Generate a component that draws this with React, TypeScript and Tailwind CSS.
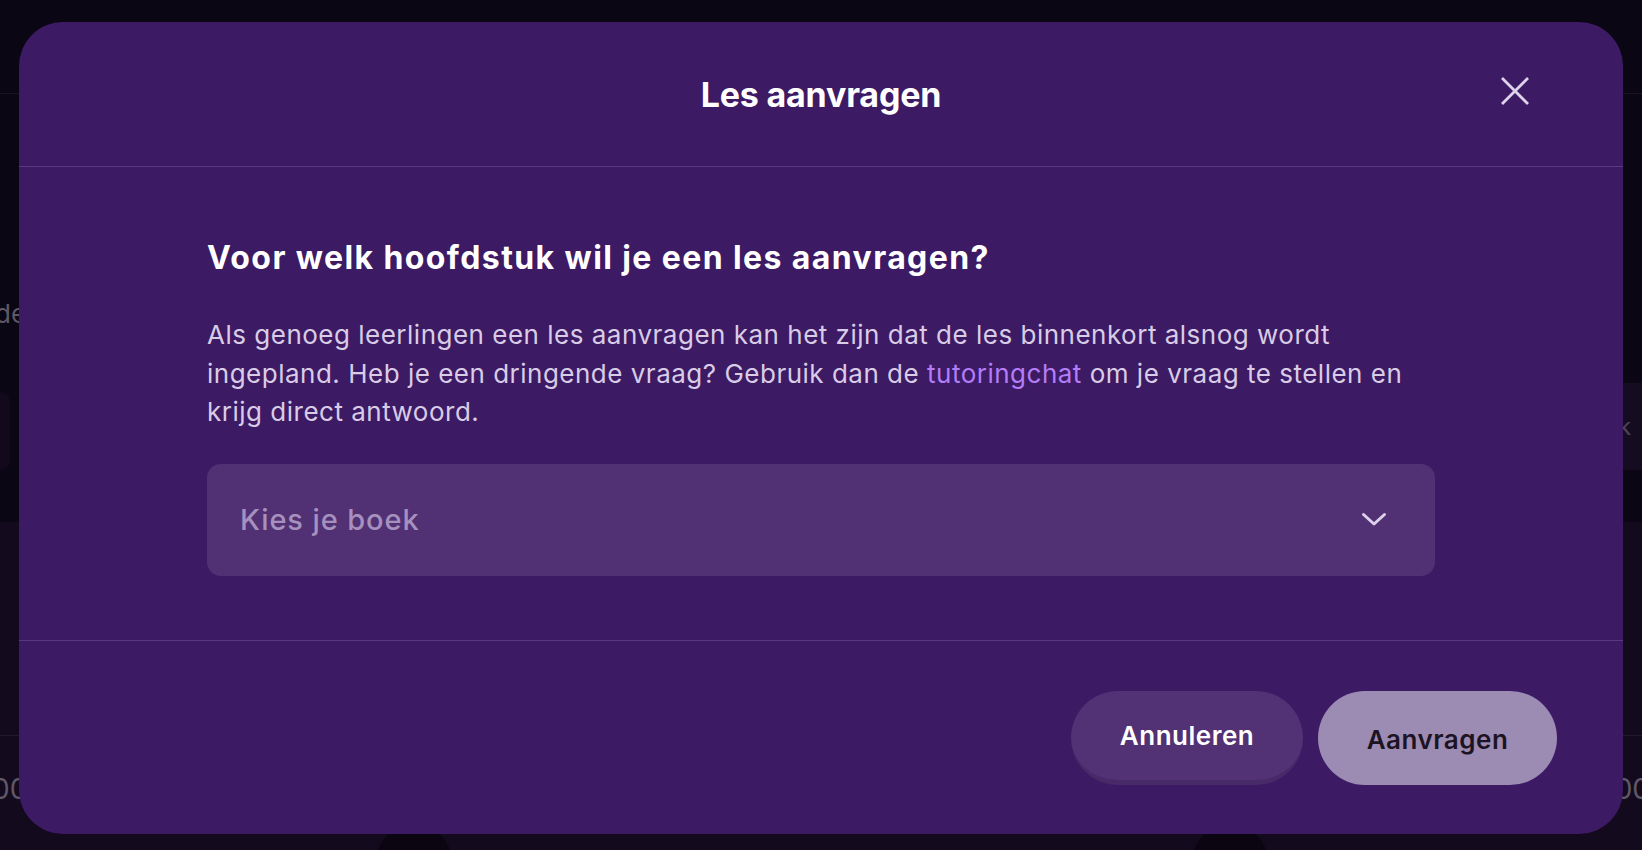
import React, { useState } from 'react';

// Dialog for requesting a lesson, shown over the dimmed course page.

const CloseIcon: React.FC = () => (
    <svg width="30" height="30" viewBox="0 0 30 30" fill="none" stroke="currentColor" strokeWidth="2.8" strokeLinecap="square">
        <path d="M3 3 L27 27 M27 3 L3 27" />
    </svg>
);

const Chevron: React.FC = () => (
    <svg width="26" height="15" viewBox="0 0 26 15" fill="none" stroke="currentColor" strokeWidth="3" strokeLinecap="round" strokeLinejoin="round">
        <path d="M2.5 2.5 L13 12 L23.5 2.5" />
    </svg>
);

const BackdropPage: React.FC = () => (
    <div className="flex h-full flex-col text-[#5f5868]">
        <div className="h-[94px] shrink-0 border-b border-[#1a1422] bg-[#0b0613]" />
        <div className="h-[189px] shrink-0 bg-[#0b0613]" />
        <div className="flex h-[60px] shrink-0 items-center bg-[#0b0613]">
            <span className="-ml-[5px] text-[26px]">de</span>
        </div>
        <div className="h-[40px] shrink-0 bg-[#0b0613]" />
        <div className="flex h-[87px] shrink-0 items-stretch justify-between bg-[#0b0613]">
            <div className="-ml-[10px] mt-[9px] w-[20px] rounded-[10px] bg-[#120a1c]" />
            <div className="flex w-[30px] items-center bg-[#150c21] pl-[6px] text-[24px] text-[#4c4456]">k</div>
        </div>
        <div className="h-[52px] shrink-0 bg-[#0b0613]" />
        <div className="h-[214px] shrink-0 border-b border-[#22192c] bg-[#130a1e]" />
        <div className="flex flex-1 flex-col bg-[#130a1e]">
            <div className="flex items-start justify-between pt-[32px]">
                <span className="-ml-[8px] text-[28px]">00</span>
                <span className="-mr-[8px] text-[28px]">:00</span>
            </div>
            <div className="mt-[14px] flex gap-[740px] pl-[376px]">
                <div className="h-[76px] w-[76px] shrink-0 rounded-full bg-[#0a0510]" />
                <div className="h-[76px] w-[76px] shrink-0 rounded-full bg-[#0a0510]" />
            </div>
        </div>
    </div>
);

export default function App() {
    const [book, setBook] = useState('');

    return (
        <div className="relative h-[850px] w-full overflow-hidden bg-[#0b0613] font-[Inter,sans-serif]">
            <BackdropPage />

            <div className="absolute inset-0 px-[19px] pt-[22px]">
                <div className="flex flex-col overflow-hidden rounded-[44px] bg-[#3d1a64]">
                    {/* header */}
                    <div className="relative flex h-[145px] items-center justify-center border-b border-[#573b7e]">
                        <h1 className="text-[34px] font-bold tracking-[-0.2px] text-white">Les aanvragen</h1>
                        <button className="absolute right-[93px] top-[54px] text-[#ddd3ea]">
                            <CloseIcon />
                        </button>
                    </div>

                    {/* body */}
                    <div className="px-[188px] pb-[64px] pt-[72px]">
                        <h2 className="text-[32px] font-bold leading-[38px] tracking-[1.4px] text-white">
                            Voor welk hoofdstuk wil je een les aanvragen?
                        </h2>
                        <p className="mt-[39px] text-[26px] leading-[38.5px] tracking-[0.5px] text-[#d8cce6]">
                            Als genoeg leerlingen een les aanvragen kan het zijn dat de les binnenkort alsnog wordt
                            ingepland. Heb je een dringende vraag? Gebruik dan de{' '}
                            <a className="text-[#b27df7]">tutoringchat</a> om je vraag te stellen en krijg direct
                            antwoord.
                        </p>
                        <div className="relative mt-[32px] flex h-[112px] items-center rounded-[14px] bg-[#513074] pl-[33px] pr-[48px]">
                            <select
                                value={book}
                                onChange={(e) => setBook(e.target.value)}
                                className="absolute inset-0 cursor-pointer opacity-0"
                            >
                                <option value="">Kies je boek</option>
                            </select>
                            <span className="flex-1 text-[29px] font-medium tracking-[0.9px] text-[#a690be]">Kies je boek</span>
                            <span className="text-[#dcd0ea]">
                                <Chevron />
                            </span>
                        </div>
                    </div>

                    {/* footer */}
                    <div className="flex justify-end gap-[15px] border-t border-[#573b7e] pb-[49px] pr-[66px] pt-[50px]">
                        <button className="h-[94px] w-[232px] rounded-full border-b-[5px] border-[#482a69] bg-[#523175] text-[26px] font-semibold tracking-[0.5px] text-white">
                            Annuleren
                        </button>
                        <button className="h-[94px] w-[239px] rounded-full bg-[#9c8bb2] pt-[4px] text-[26px] font-semibold tracking-[0.5px] text-[#1c1424]">
                            Aanvragen
                        </button>
                    </div>
                </div>
            </div>
        </div>
    );
}
